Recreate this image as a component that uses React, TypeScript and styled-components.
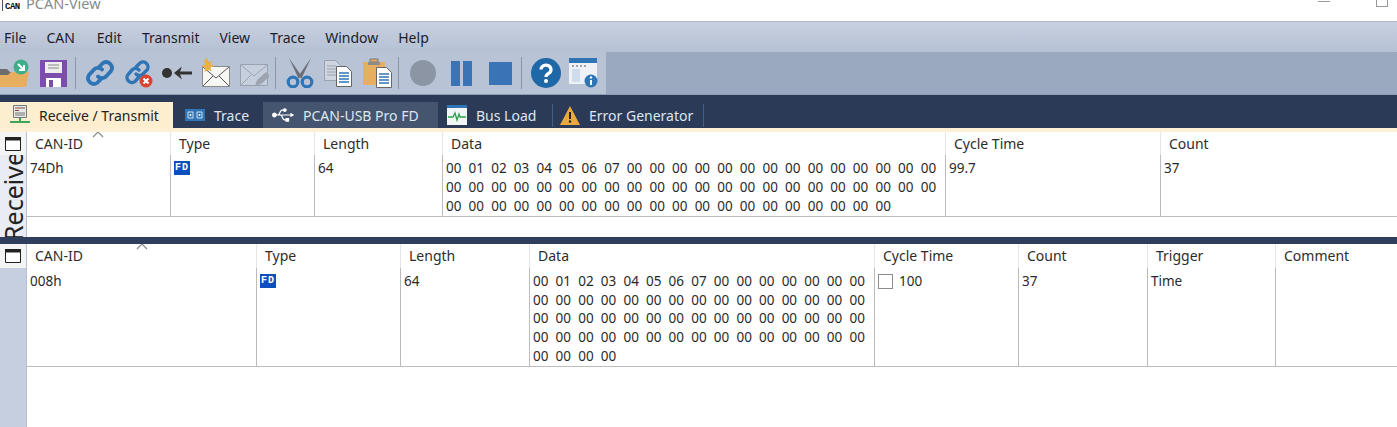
import { FC } from 'react';
import styled, { createGlobalStyle } from 'styled-components';
import { FaUsb } from 'react-icons/fa';

const GlobalStyle = createGlobalStyle`
  html, body {
    margin: 0;
    padding: 0;
    background: #fff;
  }
  body {
    font-family: 'Noto Sans', 'Open Sans', sans-serif;
    font-size: 13.5px;
    color: #2a2a2a;
  }
`;

const byteLines = (counts: number[]) => {
  const bytes = Array.from({ length: 64 }, (_, i) => (i < 8 ? `0${i}` : '00'));
  let at = 0;
  return counts.map((n) => {
    const line = bytes.slice(at, at + n).join(' ');
    at += n;
    return line;
  });
};

type PaneData = {
  columns: string[];
  widths: string;
  caretLeft: number;
  lineH: number;
  cells: { key: string; text?: string; lines?: string[]; badge?: boolean; check?: boolean }[];
};

const receive: PaneData = {
  columns: ['CAN-ID', 'Type', 'Length', 'Data', 'Cycle Time', 'Count'],
  widths: '143px 144px 128px 503px 215px 1fr',
  caretLeft: 65,
  lineH: 19,
  cells: [
    { key: 'id', text: '74Dh' },
    { key: 'type', badge: true },
    { key: 'len', text: '64' },
    { key: 'data', lines: byteLines([22, 22, 20]) },
    { key: 'cycle', text: '99.7' },
    { key: 'count', text: '37' },
  ],
};

const transmit: PaneData = {
  columns: ['CAN-ID', 'Type', 'Length', 'Data', 'Cycle Time', 'Count', 'Trigger', 'Comment'],
  widths: '229px 144px 129px 345px 144px 129px 128px 1fr',
  caretLeft: 109,
  lineH: 18.7,
  cells: [
    { key: 'id', text: '008h' },
    { key: 'type', badge: true },
    { key: 'len', text: '64' },
    { key: 'data', lines: byteLines([15, 15, 15, 15, 4]) },
    { key: 'cycle', text: '100', check: true },
    { key: 'count', text: '37' },
    { key: 'trigger', text: 'Time' },
    { key: 'comment' },
  ],
};

const FolderIcon = () => (
  <svg width="30" height="30" viewBox="0 0 30 30">
    <path d="M-2 11h9l3 3h8v6H-2z" fill="#6d6d6d" />
    <path d="M-1 29V17h9l3-3h18l-3 15z" fill="#e8ae5f" />
    <circle cx="21" cy="9" r="7.500" fill="#3fae8a" />
    <path d="M18 6l6 6m0-5v5h-5" stroke="#fff" strokeWidth="2" fill="none" />
  </svg>
);

const SaveIcon = () => (
  <svg width="30" height="30" viewBox="0 0 30 30">
    <path d="M1 2h27v27H1z" fill="#7d4dab" />
    <path d="M6 4h17v11H6z" fill="#eee" />
    <path d="M9 7h11M9 10h11" stroke="#aaa" strokeWidth="1.500" />
    <path d="M7 20h15v9H7z" fill="#fff" />
    <path d="M10 22h4v7h-4z" fill="#7d4dab" />
  </svg>
);

const LinkIcon = () => (
  <svg width="30" height="30" viewBox="0 0 30 30" fill="none" stroke="#2f74b5" strokeWidth="3.800" strokeLinecap="round">
    <path d="M13 10l5-5a5.800 5.800 0 0 1 8 8l-5 5.500a5.800 5.800 0 0 1-8 0" />
    <path d="M17 20l-5 5a5.800 5.800 0 0 1-8-8l5-5.500a5.800 5.800 0 0 1 8 0" />
  </svg>
);

const UnlinkIcon = () => (
  <svg width="30" height="30" viewBox="0 0 30 30">
    <g fill="none" stroke="#2f74b5" strokeWidth="3.400" strokeLinecap="round">
      <path d="M13 9l4-4a5 5 0 0 1 7 7l-4 4a5 5 0 0 1-7 0" />
      <path d="M16 19l-4 4.500a5 5 0 0 1-7-7l4-4.500a5 5 0 0 1 7 0" />
    </g>
    <circle cx="23" cy="23" r="6.500" fill="#d9432f" />
    <path d="M20.500 20.500l5 5m0-5l-5 5" stroke="#fff" strokeWidth="2" />
  </svg>
);

const ConnectArrowIcon = () => (
  <svg width="30" height="30" viewBox="0 0 30 30">
    <circle cx="5" cy="15" r="5" fill="#333" />
    <path d="M12 15l8-6.500-2 5h12v3H18l2 5z" fill="#333" />
  </svg>
);

const NewMailIcon = () => (
  <svg width="30" height="30" viewBox="0 0 30 30">
    <path d="M2.500 8.500h27v20h-27z" fill="#f7f7f4" stroke="#8a8a8a" />
    <path d="M3 9l13 11L29 9M3 28l10-10M29 28L19 18" fill="none" stroke="#555" />
    <path d="M7 0l1.500 4 4-1.500L10.500 6l4 2-4 1.500 1 4-4-2-3 3 .5-4.500L1 8l4-1.500L4 2.500z" fill="#e9b04a" />
  </svg>
);

const GrayMailIcon = () => (
  <svg width="30" height="30" viewBox="0 0 30 30">
    <path d="M1.500 6.500h27v21h-27z" fill="#c6cfdd" stroke="#99a2ae" />
    <path d="M2 7l13 11L28 7M2 27l10-10" fill="none" stroke="#99a2ae" />
    <path d="M16 28l2-6 9-8 4 4-9 8z" fill="#9ba4b0" />
  </svg>
);

const ScissorsIcon = () => (
  <svg width="30" height="30" viewBox="0 0 30 30">
    <path d="M4 0l12.500 18-3 2.500z" fill="#6b6f75" />
    <path d="M26 0L13.500 18l3 2.500z" fill="#6b6f75" />
    <g fill="none" stroke="#2f74b5" strokeWidth="3.200">
      <circle cx="8" cy="24" r="4.800" />
      <circle cx="22" cy="24" r="4.800" />
    </g>
  </svg>
);

const Sheet: FC<{ x: number; y: number }> = ({ x, y }) => (
  <g transform={`translate(${x} ${y})`}>
    <path d="M.5.500h10l5 5v15H.5z" fill="#fff" stroke="#666" />
    <path d="M3 7h10M3 10h10M3 13h10M3 16h10" stroke="#2f74b5" strokeWidth="1.500" />
  </g>
);

const CopyIcon = () => (
  <svg width="30" height="30" viewBox="0 0 30 30">
    <path d="M1.500 2.500h11l5 5v15h-16z" fill="#cfd6e1" stroke="#9aa2ae" />
    <path d="M4 8h9M4 11h9M4 14h9M4 17h9" stroke="#9aa2ae" />
    <Sheet x={13} y={8} />
  </svg>
);

const PasteIcon = () => (
  <svg width="30" height="30" viewBox="0 0 30 30">
    <path d="M1 4h22v23H1z" fill="#e8ae5f" />
    <path d="M8 4h8V1H8z" fill="#e8ae5f" stroke="#777" />
    <path d="M6 4h12v3H6z" fill="#8c8c8c" />
    <Sheet x={14} y={9} />
  </svg>
);

const RecordIcon = () => (
  <svg width="30" height="30" viewBox="0 0 30 30">
    <circle cx="15" cy="15" r="13" fill="#8b95a4" />
  </svg>
);

const PauseIcon = () => (
  <svg width="30" height="30" viewBox="0 0 30 30">
    <path d="M5 3h9v25H5zM17 3h9v25h-9z" fill="#3a74b6" />
  </svg>
);

const StopIcon = () => (
  <svg width="30" height="30" viewBox="0 0 30 30">
    <path d="M4 4h23v23H4z" fill="#3a74b6" />
  </svg>
);

const HelpIcon = () => (
  <svg width="30" height="30" viewBox="0 0 30 30">
    <circle cx="15" cy="15" r="15" fill="#1f68a8" />
    <path d="M10 11.500a5 4.500 0 1 1 7.500 4c-1.800 1-2.500 1.800-2.500 3.500" fill="none" stroke="#fff" strokeWidth="3.200" />
    <circle cx="15" cy="23" r="2" fill="#fff" />
  </svg>
);

const InfoWindowIcon = () => (
  <svg width="30" height="30" viewBox="0 0 30 30">
    <path d="M0 0h28v26H0z" fill="#eef2f7" />
    <path d="M0 0h28v5H0z" fill="#2f74b5" />
    <path d="M3 8h2m2 0h2m2 0h2m2 0h2" stroke="#555" />
    <path d="M3 11h8v13H3z" fill="#cfdcec" />
    <circle cx="22" cy="23" r="6.500" fill="#2f74b5" />
    <path d="M22 22v5" stroke="#fff" strokeWidth="2" />
    <circle cx="22" cy="19.500" r="1.200" fill="#fff" />
  </svg>
);

const MonitorTabIcon = () => (
  <svg width="20" height="20" viewBox="0 0 20 20">
    <path d="M3.500.5h13v12h-13z" fill="#e8e8e8" stroke="#777" />
    <path d="M5 3h10M5 5.500h4" stroke="#8a4a3a" />
    <path d="M5 8h10M5 10h10" stroke="#777" />
    <path d="M10 13v3M0 17h20" stroke="#3fa35a" strokeWidth="2" />
  </svg>
);

const TraceTabIcon = () => (
  <svg width="20" height="12" viewBox="0 0 20 12">
    <path d="M0 0h20v12H0z" fill="#2f74b5" />
    <path d="M3 3h5v6H3zM12 3h5v6h-5z" fill="none" stroke="#cfe0f2" />
    <circle cx="5.500" cy="6" r="1" fill="#fff" />
    <circle cx="14.500" cy="6" r="1" fill="#fff" />
  </svg>
);

const BusLoadTabIcon = () => (
  <svg width="20" height="20" viewBox="0 0 20 20">
    <path d="M0 0h20v20H0z" fill="#f2f5f5" />
    <path d="M0 0h20v3H0z" fill="#2f74b5" />
    <path d="M1 12h5l2-4 2 7 2-6 1 3h6" fill="none" stroke="#2ba14b" strokeWidth="1.300" />
  </svg>
);

const WarningTabIcon = () => (
  <svg width="20" height="19" viewBox="0 0 20 19">
    <path d="M10 0l10 19H0z" fill="#eaa93f" />
    <path d="M10 6v7" stroke="#222" strokeWidth="2" />
    <circle cx="10" cy="15.500" r="1.200" fill="#222" />
  </svg>
);

const WindowHeaderIcon = () => (
  <svg width="16" height="14" viewBox="0 0 16 14">
    <path d="M.5.500h15v13H.5z" fill="#fff" stroke="#222" />
    <path d="M0 0h16v3.500H0z" fill="#222" />
  </svg>
);

const Page = styled.div`
  display: flex;
  flex-direction: column;
  height: 427px;
  overflow: hidden;
`;

const TitleBar = styled.div`
  height: 21px;
  flex: none;
  display: flex;
  align-items: flex-end;
  overflow: hidden;
  background: #fff;
  border-bottom: 1px solid #aeb8c9;
  padding: 0 9px 0 2px;
`;

const AppLogo = styled.div`
  align-self: flex-start;
  width: 20px;
  height: 11px;
  font: 700 9px 'Liberation Mono', monospace;
  color: #111;
  line-height: 1;
  letter-spacing: -0.5px;
  border-left: 1px solid #555;
  padding: 3px 0 0 2px;
  box-sizing: border-box;
`;

const AppTitle = styled.span`
  margin: 0 0 8px 4px;
  font-size: 14.5px;
  line-height: 20px;
  color: #8a8a8a;
`;

const WinControls = styled.div`
  margin-left: auto;
  align-self: flex-start;
  display: flex;
  align-items: flex-start;
  gap: 46px;
`;

const MinimizeMark = styled.div`
  width: 12px;
  height: 1px;
  margin-top: 1px;
  background: #999;
`;

const MaximizeMark = styled.div`
  width: 10px;
  height: 6px;
  border: 1px solid #999;
  border-top: none;
`;

const MenuBar = styled.nav`
  height: 30px;
  flex: none;
  display: flex;
  align-items: center;
  gap: 20px;
  padding-left: 4px;
  background: linear-gradient(#c7d0e0, #b6c1d4);
  font-size: 14px;
`;

const MenuItem = styled.span`
  color: #1c1c2a;
  &:nth-child(2) {
    margin-right: 2px;
  }
`;

const ToolArea = styled.div`
  height: 43px;
  flex: none;
  display: flex;
  background: #9aa8c0;
  border-bottom: 1px solid #8d9bb3;
  box-sizing: border-box;
`;

const Toolbar = styled.div`
  display: flex;
  align-items: center;
  gap: 8.5px;
  padding-right: 7px;
  background: #b8c3d6;
`;

const ToolSep = styled.div`
  width: 1px;
  height: 32px;
  margin-left: -2px;
  background: #8a96a9;
`;

const TabBar = styled.div`
  height: 33px;
  flex: none;
  display: flex;
  align-items: stretch;
  background: #2b3a57;
  font-size: 14px;
`;

const Tab = styled.div<{ $w: number; $pad: number; $state?: 'active' | 'hover' }>`
  width: ${({ $w }) => $w}px;
  box-sizing: border-box;
  display: flex;
  align-items: center;
  gap: 9px;
  padding-left: ${({ $pad }) => $pad}px;
  margin-top: 7px;
  background: ${({ $state }) =>
    $state === 'active' ? '#fdeecf' : $state === 'hover' ? '#45556f' : 'transparent'};
  color: ${({ $state }) => ($state === 'active' ? '#222' : '#dfe6f0')};
`;

const TabDivider = styled.div`
  width: 1px;
  margin: 9px 0 1px;
  background: #40608c;
`;

const CreamBand = styled.div`
  height: 4px;
  flex: none;
  background: #fdf0d6;
`;

const Pane = styled.section<{ $grow?: boolean }>`
  display: flex;
  flex: ${({ $grow }) => ($grow ? '1' : 'none')};
  height: ${({ $grow }) => ($grow ? 'auto' : '105px')};
  overflow: hidden;
  min-height: 0;
`;

const Strip = styled.div<{ $tint: string }>`
  width: 27px;
  flex: none;
  display: flex;
  flex-direction: column;
  background: ${({ $tint }) => $tint};
  border-right: 1px solid #b5bfce;
  box-sizing: border-box;
  overflow: hidden;
`;

const StripCorner = styled.div<{ $h: number }>`
  height: ${({ $h }) => $h}px;
  flex: none;
  background: #f4f4f4;
  display: flex;
  justify-content: center;
  padding-top: 5px;
  box-sizing: border-box;
`;

const StripClip = styled.div`
  flex: 1;
  min-height: 0;
  overflow: hidden;
`;

const StripLabel = styled.div`
  height: 88px;
  margin-top: -2px;
  width: 27px;
  font-size: 25px;
  line-height: 27px;
  color: #222;
  white-space: nowrap;
  writing-mode: vertical-rl;
  transform: rotate(180deg);
`;

const Table = styled.div`
  flex: 1;
  min-width: 0;
  position: relative;
`;

const HeaderRow = styled.div<{ $widths: string; $h: number }>`
  display: grid;
  grid-template-columns: ${({ $widths }) => $widths};
  height: ${({ $h }) => $h}px;
`;

const HeaderCell = styled.div`
  padding: 2px 0 0 8px;
  line-height: 20px;
  font-size: 14px;
  color: #2d2d2d;
  border-left: 1px solid #e6e6e6;
  &:first-child {
    border-left: none;
  }
`;

const SortCaret = styled.svg<{ $left: number }>`
  position: absolute;
  top: -1px;
  left: ${({ $left }) => $left}px;
`;

const DataRow = styled.div<{ $widths: string; $lineH: number }>`
  display: grid;
  grid-template-columns: ${({ $widths }) => $widths};
  border-bottom: 1px solid #bcbcbc;
  line-height: ${({ $lineH }) => $lineH}px;
`;

const Cell = styled.div`
  padding: 4px 0 0 3px;
  border-left: 1px solid #bcbcbc;
  display: flex;
  flex-direction: column;
  &:first-child {
    border-left: none;
  }
`;

const ByteLine = styled.div`
  word-spacing: 3.65px;
  white-space: nowrap;
`;

const FdBadge = styled.span`
  width: 16px;
  height: 14px;
  margin-top: 2px;
  background: #0d4fc0;
  color: #fff;
  font: 700 10px/14px 'Liberation Mono', monospace;
  letter-spacing: 1px;
  text-align: center;
`;

const CheckLine = styled.div`
  display: flex;
  align-items: center;
  gap: 6px;
`;

const CheckBox = styled.span`
  width: 15px;
  height: 15px;
  border: 1px solid #8c8c8c;
  box-sizing: border-box;
`;

const PaneDivider = styled.div`
  height: 7px;
  flex: none;
  background: #2f3e5c;
`;

const TablePane: FC<{ data: PaneData; headerH: number }> = ({ data, headerH }) => (
  <Table>
    <HeaderRow $widths={data.widths} $h={headerH}>
      {data.columns.map((c) => (
        <HeaderCell key={c}>{c}</HeaderCell>
      ))}
    </HeaderRow>
    <SortCaret $left={data.caretLeft} width="12" height="7" viewBox="0 0 12 7">
      <path d="M1 6l5-5 5 5" fill="none" stroke="#888" strokeWidth="1.200" />
    </SortCaret>
    <DataRow $widths={data.widths} $lineH={data.lineH}>
      {data.cells.map((c) => (
        <Cell key={c.key}>
          {c.badge && <FdBadge>FD</FdBadge>}
          {c.lines?.map((l, i) => <ByteLine key={i}>{l}</ByteLine>)}
          {c.check ? (
            <CheckLine>
              <CheckBox />
              {c.text}
            </CheckLine>
          ) : (
            !c.lines && c.text
          )}
        </Cell>
      ))}
    </DataRow>
  </Table>
);

const App = () => (
  <Page>
    <GlobalStyle />
    <TitleBar>
      <AppLogo>CAN</AppLogo>
      <AppTitle>PCAN-View</AppTitle>
      <WinControls>
        <MinimizeMark />
        <MaximizeMark />
      </WinControls>
    </TitleBar>
    <MenuBar>
      {['File', 'CAN', 'Edit', 'Transmit', 'View', 'Trace', 'Window', 'Help'].map((m) => (
        <MenuItem key={m}>{m}</MenuItem>
      ))}
    </MenuBar>
    <ToolArea>
      <Toolbar>
        <FolderIcon />
        <SaveIcon />
        <ToolSep />
        <LinkIcon />
        <UnlinkIcon />
        <ConnectArrowIcon />
        <NewMailIcon />
        <GrayMailIcon />
        <ToolSep />
        <ScissorsIcon />
        <CopyIcon />
        <PasteIcon />
        <ToolSep />
        <RecordIcon />
        <PauseIcon />
        <StopIcon />
        <ToolSep />
        <HelpIcon />
        <InfoWindowIcon />
      </Toolbar>
    </ToolArea>
    <TabBar>
      <Tab $w={173} $pad={10} $state="active">
        <MonitorTabIcon />
        Receive / Transmit
      </Tab>
      <Tab $w={90} $pad={12}>
        <TraceTabIcon />
        Trace
      </Tab>
      <Tab $w={175} $pad={9} $state="hover">
        <FaUsb size={22} color="#fff" />
        PCAN-USB Pro FD
      </Tab>
      <Tab $w={114} $pad={9}>
        <BusLoadTabIcon />
        Bus Load
      </Tab>
      <TabDivider />
      <Tab $w={150} $pad={7}>
        <WarningTabIcon />
        Error Generator
      </Tab>
      <TabDivider />
    </TabBar>
    <CreamBand />
    <Pane>
      <Strip $tint="#e9ecf2">
        <StripCorner $h={23}>
          <WindowHeaderIcon />
        </StripCorner>
        <StripClip>
          <StripLabel>Receive</StripLabel>
        </StripClip>
      </Strip>
      <TablePane data={receive} headerH={23} />
    </Pane>
    <PaneDivider />
    <Pane $grow>
      <Strip $tint="#c5cfe0">
        <StripCorner $h={24}>
          <WindowHeaderIcon />
        </StripCorner>
      </Strip>
      <TablePane data={transmit} headerH={24} />
    </Pane>
  </Page>
);

export default App;
